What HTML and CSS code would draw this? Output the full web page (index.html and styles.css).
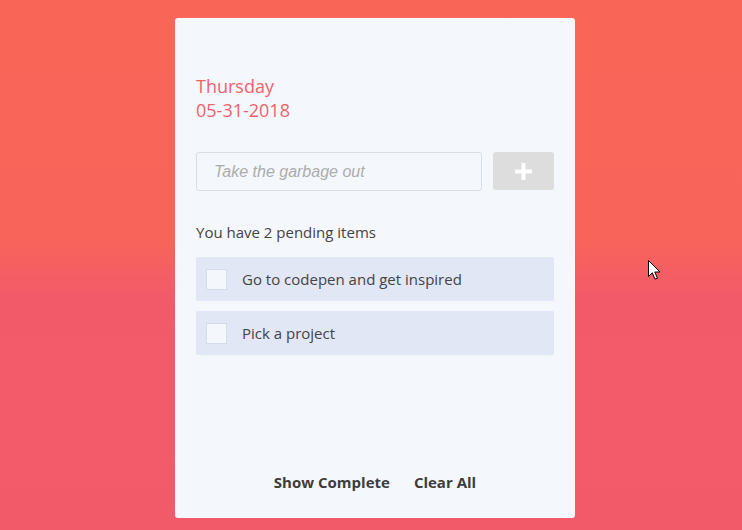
FILE: index.html
```html
<!DOCTYPE html>
<html lang="en">
  <head>
    <title>Todo</title>
    <meta charset="utf-8" />
    <meta name="viewport" content="width=device-width, initial-scale=1" />
    <link rel="stylesheet" href="styles.css">
  </head>
  <body>
    <main class="todo-card">
      <header class="date">
        <div>Thursday</div>
        <div>05-31-2018</div>
      </header>
      <form class="add-form">
        <input type="text" class="add-input" placeholder="Take the garbage out" />
        <button type="button" class="add-button" aria-label="Add">
          <svg width="17" height="17" viewBox="0 0 17 17">
            <rect x="6.5" y="0" width="4" height="17" fill="#fff" />
            <rect x="0" y="6.5" width="17" height="4" fill="#fff" />
          </svg>
        </button>
      </form>
      <p class="pending">You have 2 pending items</p>
      <ul class="todo-list">
        <li class="todo-item">
          <span class="check"></span>
          <span>Go to codepen and get inspired</span>
        </li>
        <li class="todo-item">
          <span class="check"></span>
          <span>Pick a project</span>
        </li>
      </ul>
      <footer class="actions">
        <a href="#">Show Complete</a>
        <a href="#">Clear All</a>
      </footer>
    </main>
    <svg class="cursor" width="13" height="21" viewBox="0 0 13 21">
      <path d="M0.5 0.5 L0.5 16.5 L4.3 12.8 L7 19.2 L9.4 18.2 L6.8 12 L12 12 Z"
        fill="#fff" stroke="#000" stroke-width="1" stroke-linejoin="round" />
    </svg>
  </body>
</html>
```

FILE: styles.css
```css
html {
  height: 100%;
}

body {
  margin: 0;
  height: 100vh;
  font-family: "Open Sans", sans-serif;
  background: linear-gradient(to bottom, #f96556 0%, #f8645a 45%, #f35a69 56%, #f25a6a 100%);
  display: flex;
  justify-content: center;
  align-items: flex-start;
  padding-top: 18px;
  padding-left: 8px;
  box-sizing: border-box;
  overflow: hidden;
}

.todo-card {
  width: 400px;
  height: 500px;
  box-sizing: border-box;
  background: #f4f7fb;
  border-radius: 3px;
  padding: 56px 21px 26px;
  display: flex;
  flex-direction: column;
}

.date {
  color: #f55f6b;
  font-size: 18px;
  line-height: 24px;
}

.add-form {
  display: flex;
  gap: 11px;
  margin-top: 30px;
}

.add-input {
  width: 286px;
  height: 39px;
  box-sizing: border-box;
  border: 1px solid #d9dde3;
  border-radius: 3px;
  background: #f4f7fb;
  padding: 0 17px;
  font-family: "Liberation Sans", Arial, sans-serif;
  font-size: 16px;
  color: #444;
}

.add-input::placeholder {
  font-style: italic;
  color: #acacac;
}

.add-button {
  width: 61px;
  height: 38px;
  border: 0;
  border-radius: 3px;
  background: #dddddd;
  display: flex;
  align-items: center;
  justify-content: center;
  padding: 0;
}

.pending {
  margin: 31px 0 15px;
  font-size: 15px;
  line-height: 20px;
  color: #444;
}

.todo-list {
  list-style: none;
  margin: 0;
  padding: 0;
  display: flex;
  flex-direction: column;
  gap: 10px;
}

.todo-item {
  height: 44px;
  background: #e1e7f4;
  border-radius: 2px;
  display: flex;
  align-items: center;
  padding-left: 10px;
  font-size: 15px;
  color: #444;
}

.check {
  width: 21px;
  height: 21px;
  box-sizing: border-box;
  border: 1px solid #d3dbec;
  background: #f4f7fb;
  margin-right: 15px;
}

.actions {
  margin-top: auto;
  display: flex;
  justify-content: center;
  gap: 24px;
}

.actions a {
  font-size: 15px;
  line-height: 20px;
  font-weight: 700;
  color: #3d3d3d;
  text-decoration: none;
}

.cursor {
  position: absolute;
  left: 648px;
  top: 260px;
}
```
